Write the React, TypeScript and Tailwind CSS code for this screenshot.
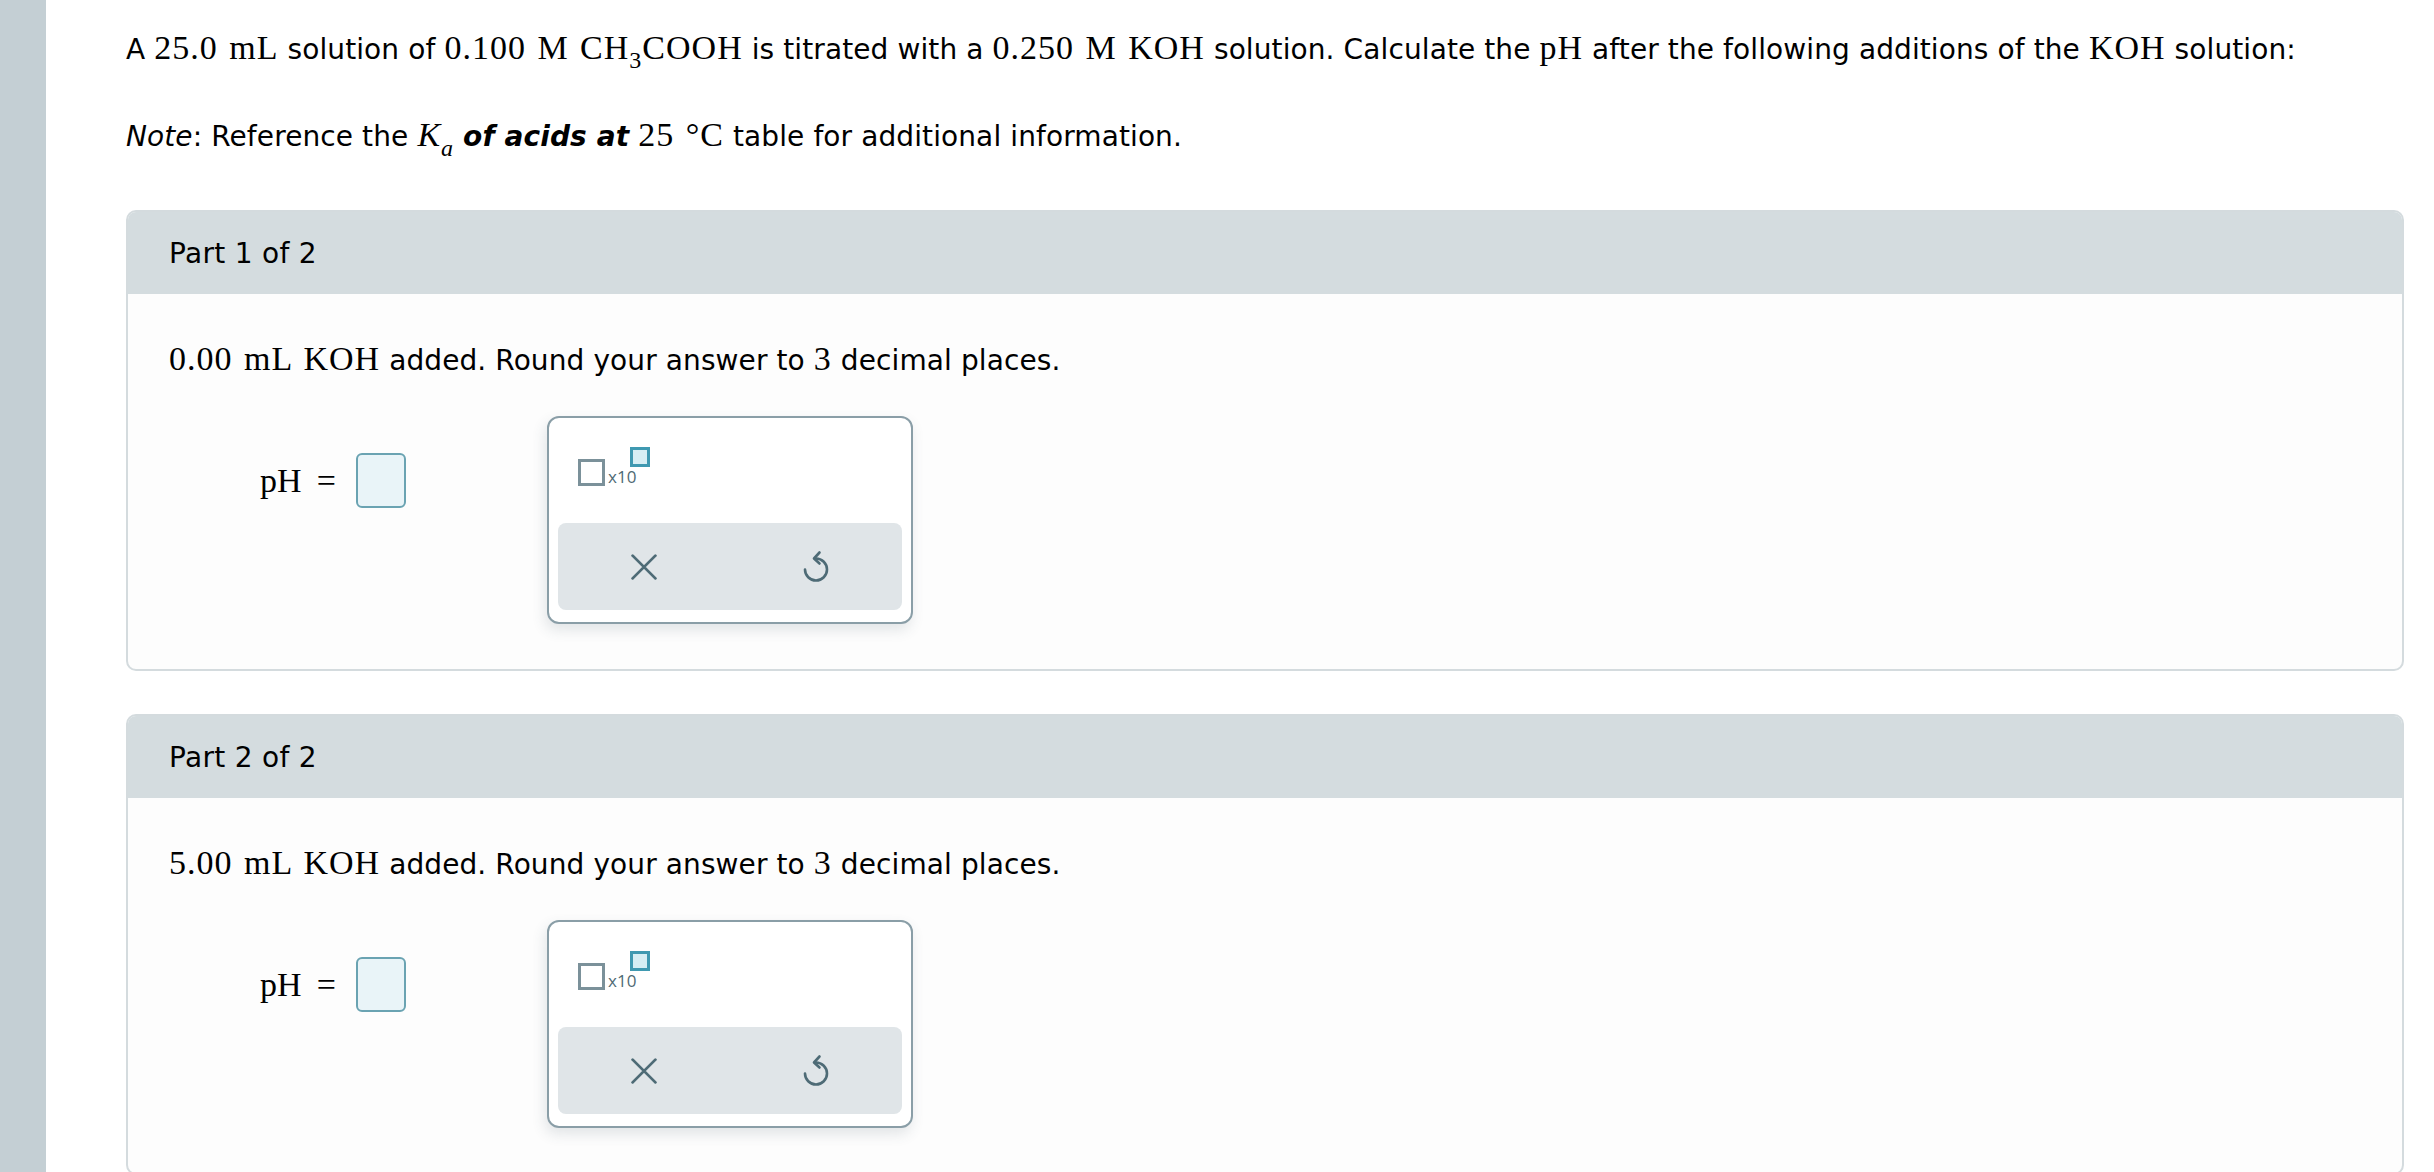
const sans = "font-['DejaVu_Sans',Verdana,sans-serif]";
const serif = "font-['Liberation_Serif','Times_New_Roman',serif]";

function M({ children }: { children: React.ReactNode }) {
  return <span className={`${serif} text-[34px] tracking-[1px] [word-spacing:2px]`}>{children}</span>;
}

function Widget() {
  return (
    <div className="ml-[141px] flex h-[208px] w-[366px] shrink-0 flex-col rounded-[12px] border-2 border-[#8a9ea7] bg-white shadow-[-2px_6px_14px_rgba(60,80,90,0.14)]">
      <div className="flex h-[105px] items-start pl-[29px] pt-[29px]">
        <div className="mt-[12px] h-[27px] w-[27px] border-[3px] border-[#7b919a]" />
        <span className="ml-[3px] mt-[21px] font-['Open_Sans',sans-serif] text-[17px] leading-none text-[#4f6a74]">
          x10
        </span>
        <div className="-ml-[7px] h-[20px] w-[20px] border-[3px] border-[#3f99b1] bg-[#d6eef4]" />
      </div>
      <div className="mx-[9px] grid h-[87px] grid-cols-2 items-center rounded-[8px] bg-[#e0e5e8]">
        <div className="flex justify-center">
          <svg width="26" height="26" viewBox="0 0 24 24" fill="none" stroke="#4e6b76" strokeWidth="2.6" strokeLinecap="round">
            <path d="M1.5 1.5L22.5 22.5M22.5 1.5L1.5 22.5" />
          </svg>
        </div>
        <div className="flex justify-center">
          <svg width="30" height="34" viewBox="0 0 30 34" fill="none" stroke="#4e6b76" strokeWidth="2.6" strokeLinecap="round" strokeLinejoin="round">
            <path d="M15 8.5A11 11 0 1 1 4 19.5" />
            <path d="M18.5 2.5L13 8.5L18.5 13.5" />
          </svg>
        </div>
      </div>
    </div>
  );
}

function Part({ n, amount }: { n: number; amount: string }) {
  return (
    <div className="overflow-hidden rounded-[10px] border-2 border-[#d4dbde] bg-[#fdfdfd]">
      <div className="h-[82px] bg-[#d4dcdf] pl-[41px] pt-[21px] leading-[42px] tracking-[0.3px]">
        Part {n} of 2
      </div>
      <div className="pb-[45px] pl-[41px] pt-[44px]">
        <p className="leading-[42px]">
          <M>{amount} mL KOH</M> added. Round your answer to <M>3</M> decimal places.
        </p>
        <div className="mt-[34px] flex items-start">
          <div className="ml-[91px] mt-[37px] flex items-center">
            <span className={`${serif} text-[34px] leading-[44px]`}>pH</span>
            <span className={`${serif} ml-[15px] text-[34px] leading-[44px]`}>=</span>
            <div className="ml-[20px] h-[55px] w-[50px] rounded-[6px] border-2 border-[#6aa3b2] bg-[#e9f4f8]" />
          </div>
          <Widget />
        </div>
      </div>
    </div>
  );
}

export default function App() {
  return (
    <div className={`flex min-h-screen bg-white text-[28px] tracking-[0.1px] text-black ${sans}`}>
      <div className="w-[46px] shrink-0 bg-[#c4cfd4]" />
      <main className="flex-1 pb-[40px] pl-[80px] pr-[30px] pt-[27px]">
        <p className="leading-[42px]">
          A <M>25.0 mL</M> solution of{" "}
          <M>
            0.100 M CH
            <span className="relative top-[9px] text-[24px] leading-none">3</span>
            COOH
          </M>{" "}
          is titrated with a <M>0.250 M KOH</M> solution. Calculate the <M>pH</M> after the
          following additions of the <M>KOH</M> solution:
        </p>
        <p className="mt-[43px] leading-[42px]">
          <em>Note</em>: Reference the{" "}
          <M>
            <i>K</i>
            <i className="relative top-[10px] text-[24px] leading-none">a</i>
          </M>{" "}
          <b>
            <em>of acids at</em>
          </b>{" "}
          <M>25 °C</M> table for additional information.
        </p>
        <div className="mt-[52px] flex flex-col gap-[43px]">
          <Part n={1} amount="0.00" />
          <Part n={2} amount="5.00" />
        </div>
      </main>
    </div>
  );
}
